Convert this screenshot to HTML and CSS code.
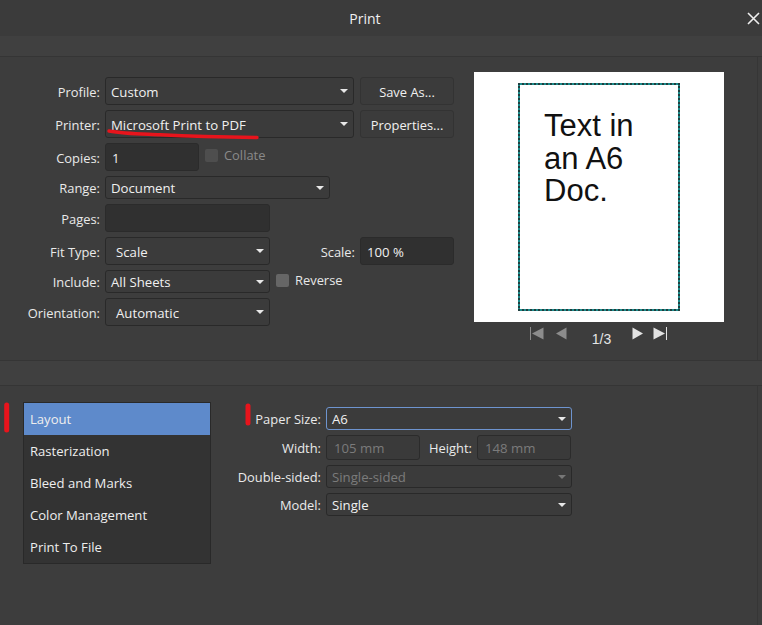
FILE: index.html
```html
<!DOCTYPE html>
<html lang="en">
<head>
<meta charset="utf-8">
<title>Print</title>
<link rel="stylesheet" href="styles.css">
</head>
<body>
<div class="window">
  <header class="titlebar">
    <div class="title">Print</div>
    <div class="close">
      <svg width="13" height="13" viewBox="0 0 13 13"><path d="M1 1 L12 12 M12 1 L1 12" stroke="#eeeeee" stroke-width="1.6" fill="none"/></svg>
    </div>
  </header>
  <div class="strip strip-top"></div>

  <section class="main">
    <div class="form">
      <div class="row">
        <label class="lbl">Profile:</label>
        <div class="ctl select w249">Custom</div>
        <div class="ctl button">Save As...</div>
      </div>
      <div class="row">
        <label class="lbl">Printer:</label>
        <div class="ctl select w249">Microsoft Print to PDF</div>
        <div class="ctl button">Properties...</div>
      </div>
      <div class="row">
        <label class="lbl">Copies:</label>
        <div class="ctl input w94 num">1</div>
        <div class="check check-dim"><span class="box"></span><span class="check-text">Collate</span></div>
      </div>
      <div class="row short">
        <label class="lbl">Range:</label>
        <div class="ctl select w225">Document</div>
      </div>
      <div class="row">
        <label class="lbl">Pages:</label>
        <div class="ctl input w165"></div>
      </div>
      <div class="row">
        <label class="lbl">Fit Type:</label>
        <div class="ctl select w165 inset">Scale</div>
        <div class="pair">
          <label class="lbl-inline">Scale:</label>
          <div class="ctl input w94 num">100 %</div>
        </div>
      </div>
      <div class="row short">
        <label class="lbl">Include:</label>
        <div class="ctl select w165">All Sheets</div>
        <div class="check"><span class="box"></span><span class="check-text">Reverse</span></div>
      </div>
      <div class="row">
        <label class="lbl">Orientation:</label>
        <div class="ctl select w165 inset">Automatic</div>
      </div>
    </div>

    <div class="preview">
      <div class="canvas">
        <div class="sheet">Text in<br>an A6<br>Doc.</div>
      </div>
      <div class="pager">
        <svg class="pg-icon" width="14" height="13" viewBox="0 0 14 13"><path d="M0.5 0 V13" stroke="#8c8c8c" stroke-width="1"/><path d="M13.5 0.5 V12.5 L2 6.5 Z" fill="#8c8c8c"/></svg>
        <svg class="pg-icon gap-a" width="11" height="13" viewBox="0 0 11 13"><path d="M10.5 0.5 V12.5 L0 6.5 Z" fill="#8c8c8c"/></svg>
        <span class="pg-text">1/3</span>
        <svg class="pg-icon" width="11" height="13" viewBox="0 0 11 13"><path d="M0.5 0.5 V12.5 L11 6.5 Z" fill="#e2e2e2"/></svg>
        <svg class="pg-icon gap-b" width="14" height="13" viewBox="0 0 14 13"><path d="M0.5 0.5 V12.5 L12 6.5 Z" fill="#e2e2e2"/><path d="M13.5 0 V13" stroke="#e2e2e2" stroke-width="1"/></svg>
      </div>
    </div>
  </section>

  <div class="strip strip-mid"></div>

  <section class="lower">
    <ul class="tabs">
      <li class="tab selected">Layout</li>
      <li class="tab">Rasterization</li>
      <li class="tab">Bleed and Marks</li>
      <li class="tab">Color Management</li>
      <li class="tab">Print To File</li>
    </ul>
    <div class="layout-form">
      <div class="row short">
        <label class="lbl lbl-lower">Paper Size:</label>
        <div class="ctl select focus w246">A6</div>
      </div>
      <div class="row tall">
        <label class="lbl lbl-lower">Width:</label>
        <div class="ctl input w94 off">105 mm</div>
        <label class="lbl-inline lbl-height">Height:</label>
        <div class="ctl input w94 off">148 mm</div>
      </div>
      <div class="row short">
        <label class="lbl lbl-lower">Double-sided:</label>
        <div class="ctl select w246 off">Single-sided</div>
      </div>
      <div class="row short">
        <label class="lbl lbl-lower">Model:</label>
        <div class="ctl select w246">Single</div>
      </div>
    </div>
  </section>

  <svg class="ink" width="762" height="625" viewBox="0 0 762 625">
    <path d="M109 131 C125 134 145 134 160 134.8 C185 136 215 137 257 137.5" stroke="#e8141c" stroke-width="3.4" stroke-linecap="round" fill="none"/>
    <path d="M6.7 405 V430" stroke="#e8141c" stroke-width="5" stroke-linecap="round" fill="none"/>
    <path d="M248 406 V423" stroke="#e8141c" stroke-width="5" stroke-linecap="round" fill="none"/>
  </svg>
</div>
</body>
</html>
```
FILE: styles.css
```css
* { box-sizing: border-box; }
html, body { margin: 0; padding: 0; }
body {
  font-family: "Open Sans", "Noto Sans", sans-serif;
  font-size: 13.2px;
  color: #ececec;
  background: #3d3d3d;
}
.window {
  position: relative;
  width: 762px;
  height: 625px;
  overflow: hidden;
  background: #3d3d3d;
}
.titlebar {
  display: flex;
  align-items: center;
  height: 36px;
  background: #3b3b3b;
}
.title { flex: 1; text-align: center; font-size: 14px; color: #f0f0f0; }
.close { width: 32px; height: 36px; display: flex; align-items: center; justify-content: flex-end; padding: 0 2px 0 0; }
.strip { background: #404040; }
.strip-top { height: 21px; border-bottom: 1px solid #353535; }
.strip-mid { height: 26px; border-top: 1px solid #353535; border-bottom: 1px solid #353535; }

.main {
  display: flex;
  height: 303px;
  padding-top: 15px;
  border-right: 1px solid #363636;
  margin-right: 4px;
}
.form {
  width: 454px;
  padding-top: 5px;
  display: flex;
  flex-direction: column;
  gap: 5px;
}
.row { display: flex; align-items: center; height: 28px; }
.row.short { height: 23px; }
.row.tall { height: 25px; }
.lbl { width: 100px; margin-right: 5px; text-align: right; color: #eaeaea; flex: none; font-size: 12.9px; }
.lbl-lower { width: 91px; }
.lbl-inline { color: #eaeaea; margin-right: 5px; font-size: 12.9px; }
.pair { display: flex; align-items: center; align-self: stretch; margin-left: auto; }

.ctl {
  position: relative;
  display: flex;
  align-items: center;
  height: 100%;
  flex: none;
  border: 1px solid #292929;
  border-radius: 3px;
  padding-left: 5px;
  color: #f0f0f0;
}
.form .row:not(.short) .ctl { padding-top: 2px; }
.form .row:not(.short) .lbl,
.form .row:not(.short) .lbl-inline { margin-top: 2px; }
.select { background: #3b3b3b; }
.select::after {
  content: "";
  position: absolute;
  right: 5px;
  top: 50%;
  margin-top: -2px;
  border-left: 4px solid transparent;
  border-right: 4px solid transparent;
  border-top: 4px solid #e8e8e8;
}
.select.inset { padding-left: 10px; }
.input { background: #303030; border-color: #2b2b2b; }
.input.num { padding-left: 6px; }
.button {
  width: 94px;
  margin-left: 6px;
  padding-left: 0;
  justify-content: center;
  background: #3b3b3b;
  border-color: #333333;
  font-size: 12.9px;
}
.off { color: #7b7b7b; }
.input.off { background: #3a3a3a; padding-left: 7px; }
.select.off::after { border-top-color: #777777; }
.focus { border-color: #6e94cf; }
.w249 { width: 249px; }
.w246 { width: 246px; }
.w225 { width: 225px; }
.w165 { width: 165px; }
.w94 { width: 94px; }

.check { display: flex; align-items: center; margin-left: 6px; color: #e8e8e8; font-size: 12.9px; }
.check .box { width: 13px; height: 13px; border-radius: 2px; background: #666666; margin-right: 6px; }
.check-dim { color: #8a8a8a; margin-top: -4px; }
.check-dim .box { background: #4e4e4e; }
.row.short .check { margin-top: -3px; }

.preview { margin-left: 20px; width: 250px; }
.canvas {
  width: 250px;
  height: 250px;
  background: #ffffff;
  padding: 11px 0 0 44px;
}
.sheet {
  width: 162px;
  height: 228px;
  border: 2px dotted #1f3f3f;
  background: linear-gradient(#fff, #fff) padding-box, #1c8c8c border-box;
  padding: 25px 0 0 24px;
  font-family: "Liberation Sans", Arial, sans-serif;
  font-size: 31px;
  line-height: 32.5px;
  color: #111111;
}
.pager { display: flex; align-items: flex-start; padding: 5px 0 0 56px; }
.pg-icon { flex: none; }
.gap-a { margin-left: 12px; }
.gap-b { margin-left: 10px; }
.pg-text {
  width: 65px;
  padding-left: 4px;
  text-align: center;
  margin-top: 4px;
  font-family: "Liberation Sans", Arial, sans-serif;
  font-size: 14px;
  color: #e6e6e6;
}

.lower {
  display: flex;
  height: 239px;
  padding: 16px 0 0 23px;
  border-right: 1px solid #363636;
  margin-right: 4px;
}
.tabs {
  list-style: none;
  width: 188px;
  height: 162px;
  margin: 0;
  padding: 0;
  background: #333333;
  border: 1px solid #292929;
}
.tab {
  height: 32px;
  display: flex;
  align-items: center;
  padding-left: 6px;
  color: #eeeeee;
  font-size: 13.1px;
}
.tab.selected { background: #5e8acb; }
.layout-form {
  display: flex;
  flex-direction: column;
  gap: 5px;
  margin: 5px 0 0 19px;
}
.lbl-height { margin-left: auto; margin-right: 5px; }
.layout-form .row { width: 341px; }

.ink { position: absolute; left: 0; top: 0; pointer-events: none; }
```
